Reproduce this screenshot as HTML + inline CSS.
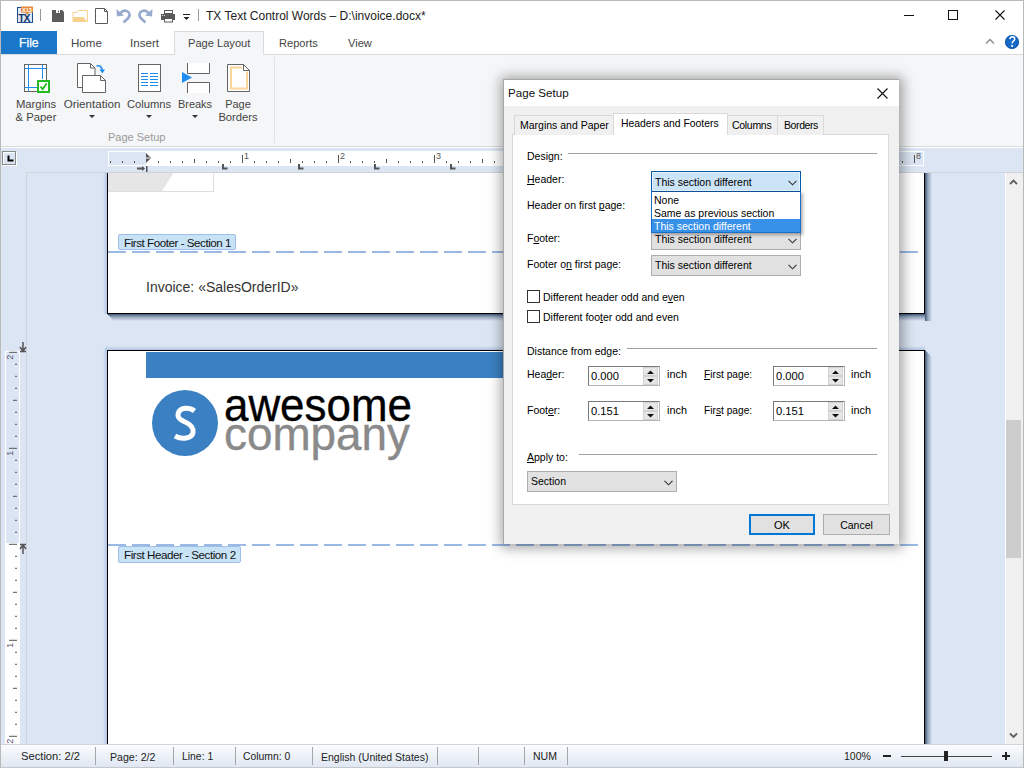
<!DOCTYPE html>
<html><head><meta charset="utf-8">
<style>
*{margin:0;padding:0;box-sizing:border-box}
html,body{width:1024px;height:768px;overflow:hidden;background:#fff;font-family:"Liberation Sans",sans-serif;color:#000}
.a{position:absolute}
.t{position:absolute;white-space:nowrap;font-size:12px;line-height:14px}
.d{font-size:10.5px;line-height:13px;color:#000}
u{text-decoration:underline;text-underline-offset:1px}
</style></head><body>
<!-- window border -->
<div class="a" style="left:0;top:0;width:1024px;height:768px;border:1px solid #b9b9b9;border-bottom:none;z-index:50;pointer-events:none"></div>

<!-- TITLE BAR -->
<div class="a" id="title" style="left:0;top:0;width:1024px;height:30px;background:#fff"></div>
<svg class="a" style="left:0;top:0" width="1024" height="30" viewBox="0 0 1024 30">
 <!-- TX icon -->
 <rect x="17.5" y="7.5" width="15" height="15" fill="#dfe9f5" stroke="#1f4f8f"/>
 <text x="18.2" y="22" font-size="10.5" font-weight="bold" fill="#17386b" font-family="Liberation Sans" letter-spacing="-1.2">TX</text>
 <path d="M21 6.5h12v6h-4l-2 2.5-2-2.5h-4z" fill="#e58a3c"/>
 <text x="22" y="12" font-size="5.5" font-weight="bold" fill="#fff" font-family="Liberation Sans">X13</text>
 
 <rect x="40" y="9" width="1" height="12" fill="#9a9a9a"/>
 <!-- save -->
 <path d="M52 10h10l2 2v10h-12z" fill="#5b5b5b"/>
 <rect x="56" y="10" width="4" height="3" fill="#fff"/>
 <rect x="58" y="10.5" width="1" height="2" fill="#5b5b5b"/>
 <!-- folder -->
 <path d="M73 12.5h4l1.5-2h9v11h-14.5z" fill="#fff" stroke="#f7d28d" stroke-width="1"/>
 <path d="M73 17h10.5l3.5 4.5h-14z" fill="#f7d28d"/>
 <!-- new doc -->
 <path d="M95.5 8.5h9l3 3v12h-12z" fill="#fff" stroke="#5a5a5a" stroke-width="1"/>
 <path d="M104.5 8.5v3h3" fill="none" stroke="#5a5a5a" stroke-width="1"/>
 <!-- undo -->
 <path d="M120 13.5 Q 124 8.8 128.3 12 Q 131 15 128 18.3 L 123.5 22.5" fill="none" stroke="#97a9cc" stroke-width="2.6"/>
 <path d="M116.5 9 L 117 16.5 L 124 15.5 z" fill="#97a9cc"/>
 <!-- redo -->
 <path d="M149 13.5 Q 145 8.8 140.7 12 Q 138 15 141 18.3 L 145.5 22.5" fill="none" stroke="#97a9cc" stroke-width="2.6"/>
 <path d="M152.5 9 L 152 16.5 L 145 15.5 z" fill="#97a9cc"/>
 <!-- printer -->
 <rect x="164.5" y="10.5" width="8" height="3" fill="#fff" stroke="#5a5a5a"/>
 <rect x="161" y="14" width="14" height="6" fill="#5a5a5a"/>
 <rect x="164.5" y="18.5" width="8" height="3.5" fill="#fff" stroke="#5a5a5a"/>
 <rect x="162" y="15" width="1" height="1" fill="#ddd"/><rect x="164" y="15" width="1" height="1" fill="#ddd"/>
 <!-- dropdown -->
 <rect x="183" y="14" width="7" height="1" fill="#222"/>
 <path d="M183.5 17h6l-3 3z" fill="#222"/>
 <rect x="198" y="9" width="1" height="12" fill="#9a9a9a"/>
 <!-- window controls -->
 <rect x="904" y="15" width="10" height="1" fill="#111"/>
 <rect x="948.5" y="10.5" width="9" height="9" fill="none" stroke="#111"/>
 <path d="M995.5 10.5l9 9M1004.5 10.5l-9 9" stroke="#111" stroke-width="1.1"/>
</svg>
<div class="t" style="left:206px;top:9px;font-size:12px;color:#222">TX Text Control Words – D:\invoice.docx*</div>

<!-- TABS ROW -->
<div class="a" style="left:0;top:30px;width:1024px;height:25px;background:#fff;border-bottom:1px solid #dadbdc"></div>
<div class="a" style="left:1px;top:31px;width:56px;height:23px;background:#1b77ca"></div>
<div class="t" style="left:19px;top:36px;color:#fff;font-size:12.2px;-webkit-text-stroke:.25px #fff">File</div>
<div class="t" style="left:71px;top:36px;font-size:11.6px;color:#444">Home</div>
<div class="t" style="left:130px;top:36px;font-size:11.6px;color:#444">Insert</div>
<div class="a" style="left:174px;top:31px;width:90px;height:25px;background:#f5f6f7;border:1px solid #dadbdc;border-bottom:none"></div>
<div class="t" style="left:188px;top:36px;font-size:11.1px;color:#444">Page Layout</div>
<div class="t" style="left:279px;top:36px;font-size:11.1px;color:#444">Reports</div>
<div class="t" style="left:348px;top:36px;font-size:11.1px;color:#444">View</div>

<!-- RIBBON BODY -->
<div class="a" style="left:0;top:55px;width:1024px;height:92px;background:#f5f6f7;border-bottom:1px solid #dadbdc"></div>
<div class="a" style="left:274px;top:57px;width:1px;height:86px;background:#e1e2e3"></div>
<svg class="a" style="left:0;top:55px" width="280" height="92" viewBox="0 55 280 92">
 <!-- margins -->
 <rect x="24.5" y="64.5" width="22" height="27" fill="#fff" stroke="#646464"/>
 <path d="M28.5 65v26M42.5 65v14M25 68.5h21M25 87.5h12" stroke="#1e8cf0" stroke-width="1"/>
 <rect x="38" y="81" width="11" height="11" fill="#fff" stroke="#22bb22" stroke-width="2"/>
 <path d="M40.5 86.5l2.2 2.8l4-6" fill="none" stroke="#22bb22" stroke-width="1.8"/>
 <!-- orientation -->
 <path d="M77.5 63.5h13l4.5 4.5v19.5h-17.5z" fill="#fff" stroke="#646464"/>
 <path d="M90.5 63.5v4.5h4.5" fill="none" stroke="#646464"/>
 <path d="M82.5 75.5h18l5 5v12h-23z" fill="#fff" stroke="#646464"/>
 <path d="M100.5 75.5v5h5" fill="none" stroke="#646464"/>
 <path d="M96.5 66 Q 101 64.5 102.3 70" fill="none" stroke="#1e8cf0" stroke-width="1.6"/>
 <path d="M99.5 69.5h5.5l-2.75 4z" fill="#1e8cf0"/>
 <!-- columns -->
 <rect x="138.5" y="64.5" width="22" height="27" fill="#fff" stroke="#646464"/>
 <path d="M141 73.5h7M150 73.5h8M141 76.5h7M150 76.5h8M141 79.5h7M150 79.5h8M141 82.5h7M150 82.5h8M141 85.5h7M150 85.5h8" stroke="#1e8cf0" stroke-width="1"/>
 <!-- breaks -->
 <path d="M187.5 62v11.5h22v-11.5" fill="#fff" stroke="#646464"/>
 <path d="M187.5 93v-10.5h22v10.5" fill="#fff" stroke="#646464"/>
 <rect x="187" y="55" width="24" height="8" fill="#f5f6f7"/>
 <path d="M182 72l10 5.5l-10 5.5z" fill="#1e8cf0"/>
 <!-- page borders -->
 <path d="M227.5 64.5h16l6 6v21h-22z" fill="#fff" stroke="#646464"/>
 <path d="M243.5 64.5v6h6" fill="none" stroke="#646464"/>
 <path d="M242 67.5h-11v21h16v-17" fill="none" stroke="#fad699" stroke-width="2"/>
 <!-- dropdown arrows -->
 <path d="M89 115h6l-3 3z M146 115h6l-3 3z M192 115h6l-3 3z" fill="#333"/>
 <rect x="274" y="57" width="1" height="86" fill="#e1e2e3"/>
</svg>
<div class="t" style="left:0;top:97px;width:72px;text-align:center;font-size:11.3px;color:#444">Margins</div>
<div class="t" style="left:0;top:110px;width:72px;text-align:center;font-size:11.3px;color:#444">&amp; Paper</div>
<div class="t" style="left:60px;top:97px;width:64px;text-align:center;font-size:11.6px;color:#444">Orientation</div>
<div class="t" style="left:124px;top:97px;width:50px;text-align:center;font-size:11.2px;color:#444">Columns</div>
<div class="t" style="left:175px;top:97px;width:40px;text-align:center;font-size:11px;color:#444">Breaks</div>
<div class="t" style="left:216px;top:97px;width:44px;text-align:center;font-size:11px;color:#444">Page</div>
<div class="t" style="left:216px;top:110px;width:44px;text-align:center;font-size:11.2px;color:#444">Borders</div>
<div class="t" style="left:108px;top:130px;font-size:11px;color:#9a9a9a">Page Setup</div>

<!-- RULER BAR -->
<div class="a" style="left:0;top:147px;width:1024px;height:1px;background:#fff"></div>
<div class="a" style="left:0;top:148px;width:1024px;height:25px;background:#dbe5f3"></div>
<div class="a" style="left:26px;top:172px;width:998px;height:1px;background:#cfd3d8"></div>
<!--RULERH--><svg class="a" style="left:0;top:148px" width="1005" height="25" viewBox="0 148 1005 25">
<rect x="108" y="151" width="816" height="15" fill="#fff"/>
<rect x="109" y="152" width="37" height="13" fill="#dbe5f3"/>
<rect x="886" y="152" width="37" height="13" fill="#dbe5f3"/>
<rect x="110.0" y="161" width="1" height="2" fill="#555"/>
<rect x="122.0" y="161" width="1" height="2" fill="#555"/>
<rect x="134.0" y="161" width="1" height="2" fill="#555"/>
<rect x="158.0" y="161" width="1" height="2" fill="#555"/>
<rect x="170.0" y="161" width="1" height="2" fill="#555"/>
<rect x="182.0" y="161" width="1" height="2" fill="#555"/>
<rect x="194.0" y="159" width="1" height="4" fill="#555"/>
<rect x="206.0" y="161" width="1" height="2" fill="#555"/>
<rect x="218.0" y="161" width="1" height="2" fill="#555"/>
<rect x="230.0" y="161" width="1" height="2" fill="#555"/>
<rect x="242.0" y="155" width="1" height="8" fill="#555"/>
<text x="244.0" y="159" font-size="9" fill="#555" font-family="Liberation Sans">1</text>
<rect x="254.0" y="161" width="1" height="2" fill="#555"/>
<rect x="266.0" y="161" width="1" height="2" fill="#555"/>
<rect x="278.0" y="161" width="1" height="2" fill="#555"/>
<rect x="290.0" y="159" width="1" height="4" fill="#555"/>
<rect x="302.0" y="161" width="1" height="2" fill="#555"/>
<rect x="314.0" y="161" width="1" height="2" fill="#555"/>
<rect x="326.0" y="161" width="1" height="2" fill="#555"/>
<rect x="338.0" y="155" width="1" height="8" fill="#555"/>
<text x="340.0" y="159" font-size="9" fill="#555" font-family="Liberation Sans">2</text>
<rect x="350.0" y="161" width="1" height="2" fill="#555"/>
<rect x="362.0" y="161" width="1" height="2" fill="#555"/>
<rect x="374.0" y="161" width="1" height="2" fill="#555"/>
<rect x="386.0" y="159" width="1" height="4" fill="#555"/>
<rect x="398.0" y="161" width="1" height="2" fill="#555"/>
<rect x="410.0" y="161" width="1" height="2" fill="#555"/>
<rect x="422.0" y="161" width="1" height="2" fill="#555"/>
<rect x="434.0" y="155" width="1" height="8" fill="#555"/>
<text x="436.0" y="159" font-size="9" fill="#555" font-family="Liberation Sans">3</text>
<rect x="446.0" y="161" width="1" height="2" fill="#555"/>
<rect x="458.0" y="161" width="1" height="2" fill="#555"/>
<rect x="470.0" y="161" width="1" height="2" fill="#555"/>
<rect x="482.0" y="159" width="1" height="4" fill="#555"/>
<rect x="494.0" y="161" width="1" height="2" fill="#555"/>
<rect x="506.0" y="161" width="1" height="2" fill="#555"/>
<rect x="518.0" y="161" width="1" height="2" fill="#555"/>
<rect x="530.0" y="155" width="1" height="8" fill="#555"/>
<text x="532.0" y="159" font-size="9" fill="#555" font-family="Liberation Sans">4</text>
<rect x="542.0" y="161" width="1" height="2" fill="#555"/>
<rect x="554.0" y="161" width="1" height="2" fill="#555"/>
<rect x="566.0" y="161" width="1" height="2" fill="#555"/>
<rect x="578.0" y="159" width="1" height="4" fill="#555"/>
<rect x="590.0" y="161" width="1" height="2" fill="#555"/>
<rect x="602.0" y="161" width="1" height="2" fill="#555"/>
<rect x="614.0" y="161" width="1" height="2" fill="#555"/>
<rect x="626.0" y="155" width="1" height="8" fill="#555"/>
<text x="628.0" y="159" font-size="9" fill="#555" font-family="Liberation Sans">5</text>
<rect x="638.0" y="161" width="1" height="2" fill="#555"/>
<rect x="650.0" y="161" width="1" height="2" fill="#555"/>
<rect x="662.0" y="161" width="1" height="2" fill="#555"/>
<rect x="674.0" y="159" width="1" height="4" fill="#555"/>
<rect x="686.0" y="161" width="1" height="2" fill="#555"/>
<rect x="698.0" y="161" width="1" height="2" fill="#555"/>
<rect x="710.0" y="161" width="1" height="2" fill="#555"/>
<rect x="722.0" y="155" width="1" height="8" fill="#555"/>
<text x="724.0" y="159" font-size="9" fill="#555" font-family="Liberation Sans">6</text>
<rect x="734.0" y="161" width="1" height="2" fill="#555"/>
<rect x="746.0" y="161" width="1" height="2" fill="#555"/>
<rect x="758.0" y="161" width="1" height="2" fill="#555"/>
<rect x="770.0" y="159" width="1" height="4" fill="#555"/>
<rect x="782.0" y="161" width="1" height="2" fill="#555"/>
<rect x="794.0" y="161" width="1" height="2" fill="#555"/>
<rect x="806.0" y="161" width="1" height="2" fill="#555"/>
<rect x="818.0" y="155" width="1" height="8" fill="#555"/>
<text x="820.0" y="159" font-size="9" fill="#555" font-family="Liberation Sans">7</text>
<rect x="830.0" y="161" width="1" height="2" fill="#555"/>
<rect x="842.0" y="161" width="1" height="2" fill="#555"/>
<rect x="854.0" y="161" width="1" height="2" fill="#555"/>
<rect x="866.0" y="159" width="1" height="4" fill="#555"/>
<rect x="878.0" y="161" width="1" height="2" fill="#555"/>
<rect x="890.0" y="161" width="1" height="2" fill="#555"/>
<rect x="902.0" y="161" width="1" height="2" fill="#555"/>
<rect x="914.0" y="155" width="1" height="8" fill="#555"/>
<text x="916.0" y="159" font-size="9" fill="#555" font-family="Liberation Sans">8</text>
<path d="M146 153l5 5l-5 5z" fill="#555"/><rect x="146" y="157.5" width="4" height="1" fill="#fff"/>
<path d="M137 168.5h7" stroke="#555" stroke-width="2"/><path d="M142 166l3 2.5l-3 2.5z" fill="#555"/><rect x="146" y="166" width="1.5" height="6" fill="#555"/>
<path d="M223 164v4.5h4.5" fill="none" stroke="#555" stroke-width="2"/>
<path d="M299 164v4.5h4.5" fill="none" stroke="#555" stroke-width="2"/>
<path d="M375 164v4.5h4.5" fill="none" stroke="#555" stroke-width="2"/>
<path d="M451 164v4.5h4.5" fill="none" stroke="#555" stroke-width="2"/>
</svg><!--/RULERH-->

<!-- DOC AREA -->
<div class="a" style="left:0;top:173px;width:1024px;height:571px;background:#dbe5f3"></div>
<div class="a" style="left:26px;top:172px;width:1px;height:572px;background:#cfd3d8"></div>
<!--RULERV--><svg class="a" style="left:0;top:173px" width="27" height="571" viewBox="0 173 27 571">
<rect x="5" y="351" width="15" height="400" fill="#fff"/>
<rect x="6" y="352" width="13" height="191" fill="#dbe5f3"/>
<rect x="9" y="351.8" width="8" height="1" fill="#555"/>
<text transform="translate(13 359.8) rotate(-90)" font-size="9" fill="#5a5070" font-family="Liberation Sans">2</text>
<rect x="15" y="363.8" width="2" height="1" fill="#555"/>
<rect x="15" y="375.8" width="2" height="1" fill="#555"/>
<rect x="15" y="387.8" width="2" height="1" fill="#555"/>
<rect x="13" y="399.8" width="4" height="1" fill="#555"/>
<rect x="15" y="411.8" width="2" height="1" fill="#555"/>
<rect x="15" y="423.8" width="2" height="1" fill="#555"/>
<rect x="15" y="435.8" width="2" height="1" fill="#555"/>
<rect x="9" y="447.8" width="8" height="1" fill="#555"/>
<text transform="translate(13 455.8) rotate(-90)" font-size="9" fill="#5a5070" font-family="Liberation Sans">1</text>
<rect x="15" y="459.8" width="2" height="1" fill="#555"/>
<rect x="15" y="471.8" width="2" height="1" fill="#555"/>
<rect x="15" y="483.8" width="2" height="1" fill="#555"/>
<rect x="13" y="495.8" width="4" height="1" fill="#555"/>
<rect x="15" y="507.8" width="2" height="1" fill="#555"/>
<rect x="15" y="519.8" width="2" height="1" fill="#555"/>
<rect x="15" y="531.8" width="2" height="1" fill="#555"/>
<rect x="9" y="543.8" width="8" height="1" fill="#555"/>
<rect x="15" y="555.8" width="2" height="1" fill="#555"/>
<rect x="15" y="567.8" width="2" height="1" fill="#555"/>
<rect x="15" y="579.8" width="2" height="1" fill="#555"/>
<rect x="13" y="591.8" width="4" height="1" fill="#555"/>
<rect x="15" y="603.8" width="2" height="1" fill="#555"/>
<rect x="15" y="615.8" width="2" height="1" fill="#555"/>
<rect x="15" y="627.8" width="2" height="1" fill="#555"/>
<rect x="9" y="639.8" width="8" height="1" fill="#555"/>
<text transform="translate(13 647.8) rotate(-90)" font-size="9" fill="#5a5070" font-family="Liberation Sans">1</text>
<rect x="15" y="651.8" width="2" height="1" fill="#555"/>
<rect x="15" y="663.8" width="2" height="1" fill="#555"/>
<rect x="15" y="675.8" width="2" height="1" fill="#555"/>
<rect x="13" y="687.8" width="4" height="1" fill="#555"/>
<rect x="15" y="699.8" width="2" height="1" fill="#555"/>
<rect x="15" y="711.8" width="2" height="1" fill="#555"/>
<rect x="15" y="723.8" width="2" height="1" fill="#555"/>
<rect x="9" y="735.8" width="8" height="1" fill="#555"/>
<text transform="translate(13 743.8) rotate(-90)" font-size="9" fill="#5a5070" font-family="Liberation Sans">2</text>
<path d="M23 342v8M20 347l3 4l3-4M20 351.5h6" fill="none" stroke="#555" stroke-width="1.5"/>
<path d="M23 554v-8M20 549l3-4l3 4M20 544.5h6" fill="none" stroke="#555" stroke-width="1.5"/>
</svg><!--/RULERV-->
<!-- scrollbar -->
<div class="a" style="left:1005px;top:173px;width:18px;height:571px;background:#f0f0f0;border-left:1px solid #fff"></div>
<div class="a" style="left:1006px;top:420px;width:15px;height:138px;background:#cdcdcd"></div>

<!-- DOC CLIP -->
<div class="a" style="left:27px;top:173px;width:978px;height:571px;overflow:hidden">
 <div class="a" style="left:76px;top:-37px;width:4px;height:178px;background:linear-gradient(90deg,rgba(150,175,215,0),rgba(150,175,215,.6));clip-path:polygon(0 4px,100% 0,100% 100%,0 calc(100% - 0px))"></div>
 <div class="a" style="left:80px;top:-37px;width:818px;height:4px;background:linear-gradient(rgba(150,175,215,0),rgba(150,175,215,.6));clip-path:polygon(0 0,100% 0,calc(100% - 0px) 100%,0 100%)"></div>
 <div class="a" style="left:898px;top:-33px;width:7px;height:181px;background:linear-gradient(90deg,rgba(55,80,115,.95),rgba(55,80,115,.45) 40%,rgba(55,80,115,0));clip-path:polygon(0 0,100% 7px,100% 100%,0 100%)"></div>
 <div class="a" style="left:80px;top:141px;width:818px;height:7px;background:linear-gradient(rgba(55,80,115,.95),rgba(55,80,115,.45) 40%,rgba(55,80,115,0));clip-path:polygon(0 0,100% 0,100% 100%,7px 100%)"></div>
 <!-- PAGE 1 -->
 <div class="a" style="left:80px;top:-30px;width:818px;height:171px;background:#fff;border:1px solid #000;"></div>
 <div class="a" style="left:81px;top:-1px;width:106px;height:20px;background:#fff;border-right:1px solid #dedede;border-bottom:1px solid #dedede"></div>
 <svg class="a" style="left:81px;top:-1px" width="70" height="20" viewBox="0 0 70 20"><path d="M0 0h66l-12 19h-54z" fill="#e6e6e6"/></svg>
 <div class="a" style="left:81px;top:78px;width:816px;height:2px;background:repeating-linear-gradient(90deg,#9ab9e5 0 18px,transparent 18px 24px)"></div>
 <div class="a" style="left:91px;top:61px;width:118px;height:16px;background:#c8e2f6;border:1px solid #9dbfe8;border-radius:2px"></div>
 <div class="t" style="left:97px;top:63px;font-size:11.6px;letter-spacing:-0.45px;color:#111">First Footer - Section 1</div>
 <div class="t" style="left:119px;top:106px;font-size:14px;line-height:16px;color:#333">Invoice: «SalesOrderID»</div>
 <div class="a" style="left:76px;top:173px;width:4px;height:654px;background:linear-gradient(90deg,rgba(150,175,215,0),rgba(150,175,215,.6));clip-path:polygon(0 4px,100% 0,100% 100%,0 calc(100% - 0px))"></div>
 <div class="a" style="left:80px;top:173px;width:818px;height:4px;background:linear-gradient(rgba(150,175,215,0),rgba(150,175,215,.6));clip-path:polygon(0 0,100% 0,calc(100% - 0px) 100%,0 100%)"></div>
 <div class="a" style="left:898px;top:177px;width:7px;height:657px;background:linear-gradient(90deg,rgba(55,80,115,.95),rgba(55,80,115,.45) 40%,rgba(55,80,115,0));clip-path:polygon(0 0,100% 7px,100% 100%,0 100%)"></div>
 <div class="a" style="left:80px;top:827px;width:818px;height:7px;background:linear-gradient(rgba(55,80,115,.95),rgba(55,80,115,.45) 40%,rgba(55,80,115,0));clip-path:polygon(0 0,100% 0,100% 100%,7px 100%)"></div>
 <!-- PAGE 2 -->
 <div class="a" style="left:80px;top:177px;width:818px;height:500px;background:#fff;border:1px solid #000;"></div>
 <div class="a" style="left:119px;top:179px;width:739px;height:26px;background:#3b80c3"></div>
 <svg class="a" style="left:125px;top:217px" width="70" height="70" viewBox="0 0 70 70">
  <circle cx="33" cy="33" r="33" fill="#3b80c3"/>
  <path d="M42.5 21 C38 17.5, 30 17, 27 21.5 C24.5 25.5, 26.5 29, 32 31.5 C38 34, 42 37, 41 42.5 C40 48.5, 30 50, 23 46" fill="none" stroke="#fff" stroke-width="5"/>
 </svg>
 <div class="t" style="left:197px;top:207px;font-size:47px;line-height:50px;color:#000;-webkit-text-stroke:.4px #000;transform:scaleX(0.934);transform-origin:0 0">awesome</div>
 <div class="t" style="left:197px;top:236px;font-size:47px;line-height:50px;color:#8a8a8a;-webkit-text-stroke:.4px #8a8a8a;transform:scaleX(0.975);transform-origin:0 0">company</div>
 <div class="a" style="left:81px;top:371px;width:816px;height:2px;background:repeating-linear-gradient(90deg,#9ab9e5 0 18px,transparent 18px 24px)"></div>
 <div class="a" style="left:91px;top:373px;width:123px;height:17px;background:#c8e2f6;border:1px solid #9dbfe8;border-radius:2px"></div>
 <div class="t" style="left:97px;top:375px;font-size:11.6px;letter-spacing:-0.45px;color:#111">First Header - Section 2</div>
</div>


<!-- ruler L button -->
<div class="a" style="left:2px;top:151px;width:14px;height:14px;border:1px solid #8a8a8a;background:#dbe5f3;box-shadow:1px 1px 0 #fff, inset 1px 1px 0 #fff"></div>
<svg class="a" style="left:2px;top:151px" width="14" height="14" viewBox="0 0 14 14"><path d="M6.5 4.5v5h5" fill="none" stroke="#000" stroke-width="2"/></svg>
<!-- caret + help -->
<svg class="a" style="left:980px;top:30px" width="44" height="24" viewBox="980 30 44 24">
 <path d="M986 43.5l4-4l4 4" fill="none" stroke="#8a8a8a" stroke-width="1.3"/>
 <circle cx="1012" cy="42" r="7" fill="#1569c7"/>
 <circle cx="1012" cy="42" r="6.3" fill="none" stroke="#0d4f9e" stroke-width=".8"/>
 <path d="M1009.8 39.2 q0.5-2.4 2.5-2.4 q2.6 0 2.4 2.3 q-.2 1.3-1.4 2 q-1 .6-1 1.9v.6" fill="none" stroke="#fff" stroke-width="1.5"/>
 <rect x="1011.2" y="45" width="1.8" height="1.8" fill="#fff"/>
</svg>
<!-- scroll arrows -->
<svg class="a" style="left:1006px;top:173px" width="17" height="571" viewBox="1006 173 17 571">
 <path d="M1010 184l3.5-3.5l3.5 3.5" fill="none" stroke="#606060" stroke-width="1.8"/>
 <path d="M1010 733.5l3.5 3.5l3.5-3.5" fill="none" stroke="#606060" stroke-width="1.8"/>
</svg>
<!-- STATUS BAR -->
<div class="a" style="left:0;top:744px;width:1024px;height:24px;background:linear-gradient(#fbfcfe,#dfe7f2);border-top:1px solid #d2d6dc;border-bottom:1px solid #c4c7cc"></div>
<div class="a" style="left:95px;top:747px;width:1px;height:18px;background:#a4a6aa"></div>
<div class="a" style="left:173px;top:747px;width:1px;height:18px;background:#a4a6aa"></div>
<div class="a" style="left:235px;top:747px;width:1px;height:18px;background:#a4a6aa"></div>
<div class="a" style="left:312px;top:747px;width:1px;height:18px;background:#a4a6aa"></div>
<div class="a" style="left:437px;top:747px;width:1px;height:18px;background:#a4a6aa"></div>
<div class="a" style="left:478px;top:747px;width:1px;height:18px;background:#a4a6aa"></div>
<div class="a" style="left:524px;top:747px;width:1px;height:18px;background:#a4a6aa"></div>
<div class="a" style="left:567px;top:747px;width:1px;height:18px;background:#a4a6aa"></div>
<div class="t" style="left:21px;top:749px;font-size:11.2px;color:#222">Section: 2/2</div>
<div class="t" style="left:110px;top:750px;font-size:10.6px;color:#222">Page: 2/2</div>
<div class="t" style="left:182px;top:750px;font-size:10.4px;color:#222">Line: 1</div>
<div class="t" style="left:243px;top:750px;font-size:10.4px;color:#222">Column: 0</div>
<div class="t" style="left:321px;top:750px;font-size:10.5px;color:#222">English (United States)</div>
<div class="t" style="left:533px;top:749px;font-size:10.5px;color:#222">NUM</div>
<div class="t" style="left:844px;top:749px;font-size:10.5px;color:#222">100%</div>
<svg class="a" style="left:880px;top:745px" width="144" height="23" viewBox="880 745 144 23">
 <rect x="883" y="755" width="8" height="2" fill="#222"/>
 <rect x="901" y="756" width="91" height="1" fill="#444"/>
 <rect x="944" y="751" width="4" height="10" fill="#222"/>
 <rect x="1002" y="755" width="8" height="2" fill="#222"/><rect x="1005" y="752" width="2" height="8" fill="#222"/>
</svg>

<!-- DIALOG -->
<div class="a" style="left:503px;top:79px;width:396px;height:465px;background:#f0f0f0;border:1px solid #a8a8a8;border-right:none;border-bottom:none;box-shadow:1px 1px 12px 3px rgba(0,0,0,.36)"></div>
<div class="a" style="left:504px;top:80px;width:395px;height:26px;background:#fff"></div>
<div class="t" style="left:508px;top:86px;font-size:11.6px;color:#111">Page Setup</div>
<svg class="a" style="left:877px;top:88px" width="11" height="11" viewBox="0 0 11 11"><path d="M0.5 0.5l10 10M10.5 0.5l-10 10" stroke="#111" stroke-width="1.1"/></svg>
<!-- tabs -->
<div class="a" style="left:512px;top:134px;width:377px;height:371px;background:#fff;border:1px solid #d9d9d9"></div>
<div class="a" style="left:514px;top:115px;width:100px;height:20px;background:#f0f0f0;border:1px solid #d9d9d9;border-bottom:none"></div>
<div class="a" style="left:727px;top:115px;width:51px;height:20px;background:#f0f0f0;border:1px solid #d9d9d9;border-bottom:none"></div>
<div class="a" style="left:777px;top:115px;width:47px;height:20px;background:#f0f0f0;border:1px solid #d9d9d9;border-bottom:none"></div>
<div class="a" style="left:613px;top:113px;width:115px;height:22px;background:#fff;border:1px solid #d9d9d9;border-bottom:none"></div>
<div class="t d" style="left:520px;top:119px">Margins and Paper</div>
<div class="t d" style="left:621px;top:117px;font-size:10.4px">Headers and Footers</div>
<div class="t d" style="left:732px;top:119px;font-size:10.5px;letter-spacing:-0.3px">Columns</div>
<div class="t d" style="left:784px;top:119px;font-size:10.5px;letter-spacing:-0.4px">Borders</div>
<!-- design -->
<div class="t d" style="left:527px;top:150px">Design:</div>
<div class="a" style="left:568px;top:153px;width:309px;height:1px;background:#a0a0a0"></div>
<div class="t d" style="left:527px;top:173px"><u>H</u>eader:</div>
<div class="t d" style="left:527px;top:199px">Header on first <u>p</u>age:</div>
<div class="t d" style="left:527px;top:232px">F<u>o</u>oter:</div>
<div class="t d" style="left:527px;top:258px">Footer o<u>n</u> first page:</div>
<div class="a" style="left:651px;top:197px;width:150px;height:21px;background:#e1e1e1;border:1px solid #adadad"></div>
<div class="t d" style="left:655px;top:201px">This section different</div>
<svg class="a" style="left:788px;top:206px" width="9" height="6" viewBox="0 0 9 6"><path d="M0.5 0.8l4 4l4-4" fill="none" stroke="#333" stroke-width="1.1"/></svg>
<div class="a" style="left:651px;top:229px;width:150px;height:21px;background:#e1e1e1;border:1px solid #adadad"></div>
<div class="t d" style="left:655px;top:233px">This section different</div>
<svg class="a" style="left:788px;top:238px" width="9" height="6" viewBox="0 0 9 6"><path d="M0.5 0.8l4 4l4-4" fill="none" stroke="#333" stroke-width="1.1"/></svg>
<div class="a" style="left:651px;top:255px;width:150px;height:21px;background:#e1e1e1;border:1px solid #adadad"></div>
<div class="t d" style="left:655px;top:259px">This section different</div>
<svg class="a" style="left:788px;top:264px" width="9" height="6" viewBox="0 0 9 6"><path d="M0.5 0.8l4 4l4-4" fill="none" stroke="#333" stroke-width="1.1"/></svg>
<div class="a" style="left:651px;top:171px;width:150px;height:21px;background:#cce4f7;border:1px solid #0a5aa8;box-shadow:inset 0 0 0 1px #e6f1fb"></div>
<div class="t d" style="left:655px;top:176px">This section different</div>
<svg class="a" style="left:788px;top:180px" width="9" height="6" viewBox="0 0 9 6"><path d="M0.5 0.8l4 4l4-4" fill="none" stroke="#333" stroke-width="1.1"/></svg>
<div class="a" style="left:651px;top:191px;width:150px;height:42px;background:#fff;border:1px solid #1c6fc8;border-top-color:#0a4f98;box-shadow:2px 2px 3px rgba(0,0,0,.3)"></div>
<div class="a" style="left:652px;top:219px;width:148px;height:13px;background:#3891e8"></div>
<div class="t d" style="left:654px;top:194px">None</div>
<div class="t d" style="left:654px;top:207px">Same as previous section</div>
<div class="t d" style="left:654px;top:220px;color:#fff">This section different</div>
<!-- checkboxes -->
<div class="a" style="left:527px;top:290px;width:13px;height:13px;background:#fff;border:1px solid #333"></div>
<div class="a" style="left:527px;top:310px;width:13px;height:13px;background:#fff;border:1px solid #333"></div>
<div class="t d" style="left:543px;top:291px">Different header odd and e<u>v</u>en</div>
<div class="t d" style="left:543px;top:311px">Different foo<u>t</u>er odd and even</div>
<!-- distance -->
<div class="t d" style="left:527px;top:345px">Distance from edge:</div>
<div class="a" style="left:627px;top:348px;width:250px;height:1px;background:#a0a0a0"></div>
<div class="t d" style="left:527px;top:368px">Hea<u>d</u>er:</div>
<div class="t d" style="left:527px;top:404px">Foot<u>e</u>r:</div>
<div class="a" style="left:588px;top:366px;width:72px;height:20px;background:#fff;border:1px solid #7a7a7a;border-right-color:#b4b4b4;border-bottom-color:#b4b4b4"></div>
<div class="t d" style="left:591px;top:370px;font-size:11.2px">0.000</div>
<div class="a" style="left:643px;top:367px;width:15px;height:9px;background:#e6e6e6;border:1px solid #d2d2d2"></div>
<div class="a" style="left:643px;top:376px;width:15px;height:9px;background:#e6e6e6;border:1px solid #d2d2d2"></div>
<svg class="a" style="left:643px;top:367px" width="15" height="18" viewBox="0 0 15 18"><path d="M4 7h7l-3.5-3.5z M4 12h7l-3.5 3.5z" fill="#111"/></svg>
<div class="a" style="left:588px;top:401px;width:72px;height:20px;background:#fff;border:1px solid #7a7a7a;border-right-color:#b4b4b4;border-bottom-color:#b4b4b4"></div>
<div class="t d" style="left:591px;top:405px;font-size:11.2px">0.151</div>
<div class="a" style="left:643px;top:402px;width:15px;height:9px;background:#e6e6e6;border:1px solid #d2d2d2"></div>
<div class="a" style="left:643px;top:411px;width:15px;height:9px;background:#e6e6e6;border:1px solid #d2d2d2"></div>
<svg class="a" style="left:643px;top:402px" width="15" height="18" viewBox="0 0 15 18"><path d="M4 7h7l-3.5-3.5z M4 12h7l-3.5 3.5z" fill="#111"/></svg>
<div class="a" style="left:773px;top:366px;width:72px;height:20px;background:#fff;border:1px solid #7a7a7a;border-right-color:#b4b4b4;border-bottom-color:#b4b4b4"></div>
<div class="t d" style="left:776px;top:370px;font-size:11.2px">0.000</div>
<div class="a" style="left:828px;top:367px;width:15px;height:9px;background:#e6e6e6;border:1px solid #d2d2d2"></div>
<div class="a" style="left:828px;top:376px;width:15px;height:9px;background:#e6e6e6;border:1px solid #d2d2d2"></div>
<svg class="a" style="left:828px;top:367px" width="15" height="18" viewBox="0 0 15 18"><path d="M4 7h7l-3.5-3.5z M4 12h7l-3.5 3.5z" fill="#111"/></svg>
<div class="a" style="left:773px;top:401px;width:72px;height:20px;background:#fff;border:1px solid #7a7a7a;border-right-color:#b4b4b4;border-bottom-color:#b4b4b4"></div>
<div class="t d" style="left:776px;top:405px;font-size:11.2px">0.151</div>
<div class="a" style="left:828px;top:402px;width:15px;height:9px;background:#e6e6e6;border:1px solid #d2d2d2"></div>
<div class="a" style="left:828px;top:411px;width:15px;height:9px;background:#e6e6e6;border:1px solid #d2d2d2"></div>
<svg class="a" style="left:828px;top:402px" width="15" height="18" viewBox="0 0 15 18"><path d="M4 7h7l-3.5-3.5z M4 12h7l-3.5 3.5z" fill="#111"/></svg>
<div class="t d" style="left:667px;top:368px;font-size:10.9px">inch</div>
<div class="t d" style="left:667px;top:404px;font-size:10.9px">inch</div>
<div class="t d" style="left:851px;top:368px;font-size:10.9px">inch</div>
<div class="t d" style="left:851px;top:404px;font-size:10.9px">inch</div>
<div class="t d" style="left:704px;top:368px;font-size:10.2px"><u>F</u>irst page:</div>
<div class="t d" style="left:704px;top:404px;font-size:10.2px">Fir<u>s</u>t page:</div>
<!-- apply -->
<div class="t d" style="left:527px;top:451px"><u>A</u>pply to:</div>
<div class="a" style="left:579px;top:454px;width:298px;height:1px;background:#a0a0a0"></div>
<div class="a" style="left:527px;top:471px;width:150px;height:21px;background:#e1e1e1;border:1px solid #adadad"></div>
<div class="t d" style="left:531px;top:475px">Section</div>
<svg class="a" style="left:664px;top:480px" width="9" height="6" viewBox="0 0 9 6"><path d="M0.5 0.8l4 4l4-4" fill="none" stroke="#333" stroke-width="1.1"/></svg>
<!-- buttons -->
<div class="a" style="left:749px;top:514px;width:66px;height:21px;background:#e1e1e1;border:2px solid #0078d7"></div>
<div class="t d" style="left:749px;top:519px;width:66px;text-align:center;font-size:11px">OK</div>
<div class="a" style="left:823px;top:514px;width:67px;height:21px;background:#e1e1e1;border:1px solid #adadad"></div>
<div class="t d" style="left:823px;top:519px;width:67px;text-align:center">Cancel</div>
</body></html>
